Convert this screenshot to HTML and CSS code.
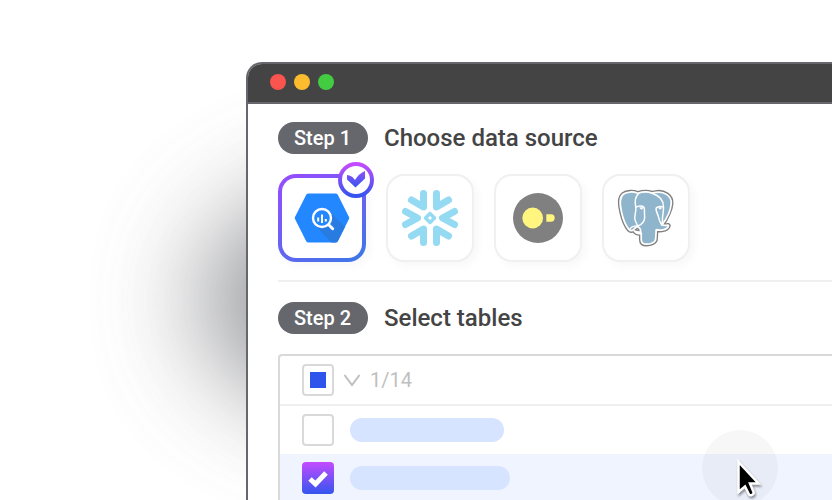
FILE: index.html
```
<!DOCTYPE html>
<html lang="en">
<head>
    <meta charset="UTF-8">
    <meta name="viewport" content="width=device-width, initial-scale=1.0">
    <title>Choose data source</title>
    <link rel="stylesheet" href="styles.css">
</head>
<body>
    <div class="stage">
        <div class="glow"></div>
        <main class="window">
            <div class="titlebar">
                <span class="dot red"></span>
                <span class="dot yellow"></span>
                <span class="dot green"></span>
            </div>
            <form class="content">
                <section class="step">
                    <div class="step-header">
                        <span class="badge">Step 1</span>
                        <h2>Choose data source</h2>
                    </div>
                    <div class="sources">
                        <label class="source">
                            <input type="radio" name="source" value="bigquery" aria-label="BigQuery" checked>
                            <svg class="logo" viewBox="0 0 64 64">
                                <defs>
                                    <clipPath id="hex"><path d="M18.500 7.500h27q1.500 0 2.300 1.300L59 31q.6 1 0 2L47.800 55.200q-.8 1.300-2.300 1.300h-27q-1.500 0-2.300-1.300L5 33q-.6-1 0-2L16.200 8.800Q17 7.500 18.500 7.500z"/></clipPath>
                                </defs>
                                <g clip-path="url(#hex)">
                                    <path d="M0 0h64v64H0z" fill="#2388ff"/>
                                    <path d="M39 25l26 26v14H49L26 40l7-1z" fill="#287be0"/>
                                </g>
                                <circle cx="32" cy="32" r="9" fill="#2388ff" stroke="#fff" stroke-width="2.400"/>
                                <path d="M28.200 31.500v4M32 28.500v8.500M35.800 33v2.500" stroke="#fff" stroke-width="2"/>
                                <path d="M38.700 38.700l4 4" stroke="#fff" stroke-width="3" stroke-linecap="round"/>
                            </svg>
                            <svg class="tick" viewBox="0 0 36 36">
                                <defs>
                                    <linearGradient id="ring" x1="0" y1="0" x2="0" y2="1">
                                        <stop offset="0" stop-color="#c44bff"/>
                                        <stop offset="1" stop-color="#3355ee"/>
                                    </linearGradient>
                                    <linearGradient id="ring-tick" x1="0" y1="0" x2="0" y2="1">
                                        <stop offset="0" stop-color="#9050fa"/>
                                        <stop offset="1" stop-color="#3355ee"/>
                                    </linearGradient>
                                </defs>
                                <circle cx="18" cy="18" r="16" fill="#fff" stroke="url(#ring)" stroke-width="4"/>
                                <path d="M9 13q5 .5 8 5 4-6.500 10-9v7.500L17.500 25.500 9 17.500z" fill="url(#ring-tick)"/>
                            </svg>
                        </label>
                        <label class="source">
                            <input type="radio" name="source" value="snowflake" aria-label="Snowflake">
                            <svg class="logo" viewBox="0 0 64 64">
                                <g fill="none" stroke="#95daf3" stroke-width="7" stroke-linecap="round" stroke-linejoin="round">
                                    <path d="M25.500 7.500v13.500l-12-7"/>
                                    <path d="M38.500 7.500v13.500l12-7"/>
                                    <path d="M25.500 56.500v-13.500l-12 7"/>
                                    <path d="M38.500 56.500v-13.500l12 7"/>
                                    <path d="M7.500 25.500l12 6.500-12 6.500"/>
                                    <path d="M56.500 25.500l-12 6.500 12 6.500"/>
                                </g>
                                <path d="M32 27.500l4.500 4.500-4.500 4.500-4.500-4.500z" fill="#fff" stroke="#95daf3" stroke-width="3.500" stroke-linejoin="round"/>
                            </svg>
                        </label>
                        <label class="source">
                            <input type="radio" name="source" value="duckdb" aria-label="DuckDB">
                            <svg class="logo" viewBox="0 0 64 64">
                                <circle cx="32" cy="32" r="25" fill="#808080"/>
                                <circle cx="26.700" cy="32" r="10.400" fill="#fff57f"/>
                                <path d="M40.300 28.300h4.700a3.700 3.700 0 0 1 0 7.400h-4.700z" fill="#fff57f"/>
                            </svg>
                        </label>
                        <label class="source">
                            <input type="radio" name="source" value="postgresql" aria-label="PostgreSQL">
                            <svg class="logo" viewBox="0 0 64 64">
                                <defs>
                                    <path id="elephant" d="M23.500 6.500C19 4.600 12 4.500 8.500 7.500 4 11.300 5 18 6.500 25c1.500 7 4.500 15 8 19 2 2 4 1 6-1.500l2.500-2c1 1 3 1.600 3 3l.5 3c-3 .3-4.500-.2-6.500-1 2 2.500 5 2.800 7 2V54c0 3.500 2 5 5.500 5S42 57.500 42 53l.5-9c3 1 8.500.5 11-1.500 1.800-1.400 2-2.800 1-3.200-2 .4-4.500.5-6-.3 5-6.500 9-16 9.500-22C58.500 9.500 51 4 42 5.500l-4 .8c-4-1.600-9-1.600-14.500.2z"/>
                                </defs>
                                <g transform="translate(1 1) scale(.97)">
                                    <use href="#elephant" fill="#808080" stroke="#808080" stroke-width="4.600" stroke-linejoin="round"/>
                                    <use href="#elephant" fill="#8fb5cd" stroke="#fff" stroke-width="1.800" stroke-linejoin="round"/>
                                    <g fill="none" stroke="#fff" stroke-width="1.500" stroke-linecap="round" stroke-linejoin="round">
                                        <path d="M24.500 6.500C20 11 20.500 17 21.500 21c.4 4-1.500 8-1 12 .3 3 2 4 2.500 7"/>
                                        <path d="M21.300 21c3-1.800 7-1.800 8.500-.2 1.200 2 .2 5 .7 8 .5 4-1 8-4 10l-3.500 1.500"/>
                                        <path d="M38 6.500c8 2.500 12 8 12 14 .3 6-1.500 10-1 13 .2 2-1 4-1 5.500"/>
                                        <path d="M49.800 20.500c-2.500-.6-6-.4-7.300 1.200-1 2 1 5 2 8 1 4 2 7 3.500 9.300"/>
                                        <path d="M15 44c2-4 5-4 8-3.500"/>
                                    </g>
                                    <path d="M25.500 21.500h3.500l-1.500 1.600zM45 21.500h3l-1.500 1.500z" fill="#fff" stroke="#fff"/>
                                </g>
                            </svg>
                        </label>
                    </div>
                </section>
                <section class="step">
                    <div class="step-header">
                        <span class="badge">Step 2</span>
                        <h2>Select tables</h2>
                    </div>
                    <div class="tables">
                        <div class="row head">
                            <input class="check partial" type="checkbox" aria-label="Select all tables">
                            <button class="count" type="button">
                                <svg class="chevron" viewBox="0 0 20 16"><path d="M2.500 3L10 13l7.500-10"/></svg>
                                <span>1/14</span>
                            </button>
                        </div>
                        <label class="row">
                            <input class="check" type="checkbox" aria-label="Table 1">
                            <span class="placeholder"></span>
                        </label>
                        <label class="row selected">
                            <span class="box">
                                <input class="check" type="checkbox" aria-label="Table 2" checked>
                                <svg class="mark" viewBox="0 0 32 32"><path d="M8 17l5.500 5L24 11"/></svg>
                            </span>
                            <span class="placeholder wide"></span>
                        </label>
                    </div>
                </section>
            </form>
        </main>
        <div class="pointer">
            <svg viewBox="0 0 30 40">
                <path d="M2.500 3v30l6.500-5.500 4 8c1 1.800 5.500 0 4.500-2.500L14 24.500h8.500z" fill="#000" stroke="#fff" stroke-width="2.500"/>
            </svg>
        </div>
    </div>
</body>
</html>
```
FILE: styles.css
```
* {
    box-sizing: border-box;
}
body {
    margin: 0;
    background-color: #fff;
    color: #444;
    font-family: Roboto, Arial, sans-serif;
}
.stage {
    position: relative;
    height: 100vh;
    padding: 62px 0 0 246px;
    overflow: hidden;
}
/* soft shadow behind the window */
.glow {
    position: absolute;
    top: 180px;
    left: 200px;
    width: 400px;
    height: 240px;
    border-radius: 50%;
    background-color: #66676c;
    opacity: 0.7;
    filter: blur(54px);
}
.window {
    position: relative;
    min-height: 100%;
    border: 2px solid #66676c;
    border-right: none;
    border-radius: 16px 0 0 0;
    background-color: #fff;
    overflow: hidden;
}
.titlebar {
    display: flex;
    align-items: center;
    gap: 8px;
    height: 40px;
    padding: 0 22px 2px;
    background-color: #444;
    border-bottom: 2px solid #66676c;
}
.dot {
    width: 16px;
    height: 16px;
    border-radius: 50%;
}
.red {
    background-color: #f9544d;
}
.yellow {
    background-color: #fcbc2e;
}
.green {
    background-color: #43cc42;
}
.content {
    padding: 0 0 0 30px;
}
.step {
    padding-top: 18px;
}
.step + .step {
    margin-top: 18px;
    padding-top: 20px;
    border-top: 2px solid #efefef;
}
.step-header {
    display: flex;
    align-items: center;
    gap: 16px;
    margin-bottom: 20px;
}
.badge {
    min-width: 90px;
    padding: 0 16px;
    border-radius: 16px;
    background-color: #66676c;
    color: #fff;
    font-size: 20px;
    font-weight: 500;
    line-height: 32px;
}
h2 {
    margin: 0;
    font-size: 24px;
    font-weight: 500;
    line-height: 32px;
}
.sources {
    display: flex;
    gap: 20px;
}
.source {
    position: relative;
    display: flex;
    align-items: center;
    justify-content: center;
    width: 88px;
    height: 88px;
    border: 2px solid #f0f0f0;
    border-radius: 18px;
    background-color: #fff;
    box-shadow: 4px 4px 8px rgba(0, 0, 0, 0.03);
    cursor: pointer;
}
.source input {
    position: absolute;
    opacity: 0;
}
.source:has(input:checked) {
    border: 4px solid transparent;
    background: linear-gradient(#fff, #fff) padding-box, linear-gradient(150deg, #9a4bff, #3a78e8) border-box;
}
.logo {
    width: 64px;
    height: 64px;
}
.tick {
    position: absolute;
    top: -16px;
    right: -12px;
    width: 36px;
    height: 36px;
}
.tables {
    border: 2px solid #d9d9d9;
    border-right: none;
    border-bottom: none;
    border-radius: 4px 0 0 0;
}
.row {
    display: flex;
    align-items: center;
    gap: 16px;
    height: 48px;
    padding: 0 22px;
}
.head {
    height: 50px;
    gap: 8px;
    border-bottom: 2px solid #efefef;
}
.selected {
    background-color: #f0f4ff;
}
.check {
    appearance: none;
    display: block;
    width: 32px;
    height: 32px;
    margin: 0;
    border: 2px solid #d9d9d9;
    border-radius: 4px;
    background-color: #fff;
}
.check:checked {
    border: none;
    background: linear-gradient(#c44bff, #3355ee);
}
.partial {
    padding: 6px;
    background: #2f54eb content-box;
}
.box {
    position: relative;
}
.mark {
    position: absolute;
    top: 0;
    left: 0;
    width: 32px;
    height: 32px;
    fill: none;
    stroke: #fff;
    stroke-width: 5;
}
.count {
    display: flex;
    align-items: center;
    gap: 8px;
    padding: 0;
    border: none;
    background: none;
    color: #bfbfbf;
    font-family: inherit;
    font-size: 20px;
    line-height: 24px;
}
.chevron {
    width: 20px;
    height: 16px;
    fill: none;
    stroke: #bfbfbf;
    stroke-width: 2;
}
.placeholder {
    width: 154px;
    height: 24px;
    border-radius: 12px;
    background-color: #d6e4ff;
}
.wide {
    width: 160px;
}
.pointer {
    position: absolute;
    top: 430px;
    left: 702px;
    width: 76px;
    height: 76px;
    padding: 29px 0 0 34px;
    border-radius: 50%;
    background-color: rgba(0, 0, 0, 0.03);
}
.pointer svg {
    display: block;
    width: 30px;
    height: 40px;
    filter: drop-shadow(1px 2px 1px rgba(0, 0, 0, 0.4));
}
```
